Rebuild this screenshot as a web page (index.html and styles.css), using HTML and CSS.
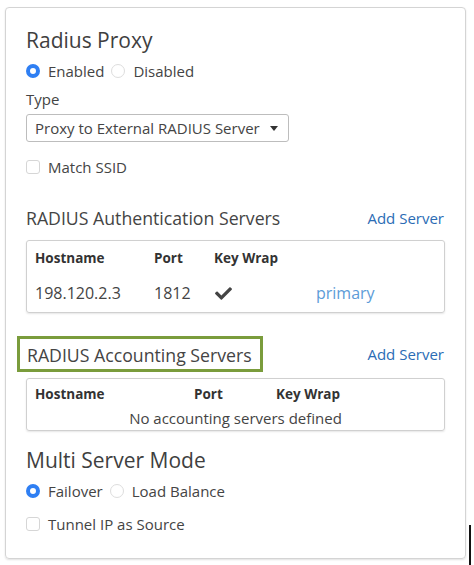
FILE: index.html
```html
<!DOCTYPE html>
<html>
<head>
<meta charset="utf-8">
<link rel="stylesheet" href="styles.css">
</head>
<body>
<div class="card">
  <h1 class="title">Radius Proxy</h1>
  <div class="radios">
    <span class="radio on"></span><span class="rlabel">Enabled</span>
    <span class="radio"></span><span class="rlabel">Disabled</span>
  </div>
  <div class="label">Type</div>
  <div class="select">
    <span>Proxy to External RADIUS Server</span>
    <span class="caret"></span>
  </div>
  <div class="check-row c1"><span class="checkbox"></span><span>Match SSID</span></div>

  <div class="section-head auth-head">
    <span class="section-title">RADIUS Authentication Servers</span>
    <span class="link">Add Server</span>
  </div>
  <div class="table auth">
    <div class="row head">
      <span class="c-host">Hostname</span><span class="c-port">Port</span><span class="c-key">Key Wrap</span>
    </div>
    <div class="row data">
      <span class="c-host">198.120.2.3</span><span class="c-port">1812</span>
      <span class="c-key"><svg class="tick" viewBox="0 0 512 512" width="19" height="17"><path d="M173.9 439.4L7.5 273c-10-10-10-26.2 0-36.2l36.2-36.2c10-10 26.2-10 36.2 0L192 312.7 432.1 72.6c10-10 26.2-10 36.2 0l36.2 36.2c10 10 10 26.2 0 36.2L210.1 439.4c-10 10-26.2 10-36.2 0z" fill="#444"/></svg></span>
      <span class="primary">primary</span>
    </div>
  </div>

  <div class="section-head acc-head">
    <span class="section-title highlight">RADIUS Accounting Servers</span>
    <span class="link">Add Server</span>
  </div>
  <div class="table acc">
    <div class="row head">
      <span class="a-host">Hostname</span><span class="a-port">Port</span><span class="a-key">Key Wrap</span>
    </div>
    <div class="empty">No accounting servers defined</div>
  </div>

  <h2 class="title2">Multi Server Mode</h2>
  <div class="radios r2">
    <span class="radio on"></span><span class="rlabel">Failover</span>
    <span class="radio"></span><span class="rlabel">Load Balance</span>
  </div>
  <div class="check-row c2"><span class="checkbox"></span><span>Tunnel IP as Source</span></div>
</div>
<div class="edge-line"></div>
</body>
</html>
```

FILE: styles.css
```css
html, body {
  margin: 0;
  padding: 0;
  background: #fff;
}
body {
  font-family: "Open Sans", "Noto Sans", sans-serif;
  color: #444;
  width: 474px;
  height: 565px;
  position: relative;
  overflow: hidden;
}
.card {
  position: relative;
  margin: 7px 0 0 5px;
  width: 461px;
  height: 552px;
  border: 1px solid #d4d4d4;
  border-radius: 4px;
  box-shadow: 0 1px 2px rgba(0,0,0,0.12);
  padding: 0 20px;
  box-sizing: border-box;
}
.title {
  margin: 0;
  padding-top: 17px;
  font-size: 21px;
  font-weight: 400;
  line-height: 30px;
  color: #3f3f3f;
}
.radios {
  display: flex;
  align-items: center;
  height: 26px;
  margin-top: 3px;
  font-size: 15px;
  color: #444;
}
.radio {
  width: 14px;
  height: 14px;
  border-radius: 50%;
  border: 1px solid #ddd;
  box-sizing: border-box;
  margin-right: 8px;
  background: #fff;
}
.radio.on {
  border: 4px solid #2f7ff3;
  background: #fff;
}
.rlabel { margin-right: 7px; }
.label {
  margin-top: 4px;
  font-size: 15px;
  line-height: 22px;
  color: #444;
}
.select {
  margin-top: 4px;
  width: 263px;
  height: 28px;
  border: 1px solid #bdbdbd;
  border-radius: 3px;
  box-sizing: border-box;
  display: flex;
  align-items: center;
  justify-content: space-between;
  padding: 0 10px 0 8px;
  font-size: 15px;
  color: #444;
}
.caret {
  width: 0;
  height: 0;
  border-left: 4px solid transparent;
  border-right: 4px solid transparent;
  border-top: 5px solid #333;
}
.check-row {
  display: flex;
  align-items: center;
  height: 22px;
  font-size: 15px;
}
.c1 { margin-top: 14px; }
.checkbox {
  width: 14px;
  height: 14px;
  border: 1px solid #d6d6d6;
  border-radius: 3px;
  box-sizing: border-box;
  margin-right: 8px;
}
.section-head {
  display: flex;
  align-items: center;
  justify-content: space-between;
  width: 418px;
}
.auth-head { margin-top: 26px; height: 28px; }
.section-title {
  font-size: 17.7px;
  color: #444;
}
.link {
  font-size: 15px;
  color: #2b6cb5;
}
.table {
  width: 419px;
  border: 1px solid #d0d0d0;
  border-radius: 3px;
  box-sizing: border-box;
  box-shadow: 0 1px 2px rgba(0,0,0,0.1);
}
.auth { margin-top: 8px; height: 73px; }
.row {
  display: flex;
  align-items: center;
  padding-left: 8px;
}
.row.head {
  font-size: 13.5px;
  font-weight: 700;
  color: #333;
  height: 33px;
}
.row.data {
  font-size: 16px;
  height: 38px;
  color: #444;
}
.c-host { width: 119px; }
.c-port { width: 60px; }
.c-key { width: 102px; display: flex; align-items: center; }
.primary { color: #5d9cd8; }
.tick { display: block; }
.acc-head { margin-top: 23px; height: 36px; }
.highlight {
  margin-left: -9px;
  padding: 0 8px 0 7px;
  height: 36px;
  line-height: 32px;
  box-sizing: border-box;
  border: 3px solid #7a9c3c;
}
.acc { margin-top: 6px; height: 53px; }
.acc .row.head { height: 30px; }
.a-host { width: 159px; }
.a-port { width: 82px; }
.empty {
  text-align: center;
  font-size: 15px;
  line-height: 18px;
  color: #444;
}
.title2 {
  margin: 14px 0 0;
  font-size: 21px;
  font-weight: 400;
  line-height: 30px;
  color: #3f3f3f;
}
.r2 { margin-top: 3px; }
.c2 { margin-top: 9px; }
.edge-line {
  position: absolute;
  left: 469px;
  top: 525px;
  width: 2px;
  height: 40px;
  background: #111;
}
```
